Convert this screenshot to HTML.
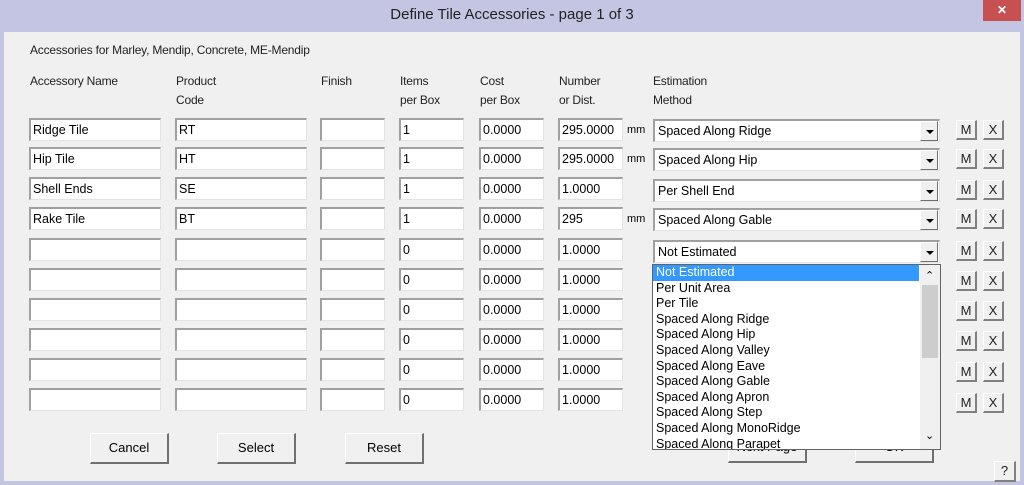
<!DOCTYPE html>
<html><head><meta charset="utf-8"><style>
*{box-sizing:border-box;margin:0;padding:0}
body{width:1024px;height:485px;background:#c3c5e3;font-family:"Liberation Sans",sans-serif;font-size:12px;color:#000;position:relative;overflow:hidden}
.title{position:absolute;left:0;top:0;width:1024px;height:32px;text-align:center;line-height:30px;font-size:15px;color:#222}
.close{position:absolute;left:983px;top:0;width:38px;height:21px;background:#c75050;color:#fff;text-align:center;line-height:20px;font-size:12px;font-weight:bold}
.client{position:absolute;left:4px;top:32px;width:1016px;height:449px;background:#f0f0f0}
.a{position:absolute}
.lbl{position:absolute;line-height:19px;color:#222;letter-spacing:-0.2px}
.in{position:absolute;height:23px;background:#fff;border-top:2px solid #a0a0a0;border-left:2px solid #a0a0a0;border-right:1px solid #e3e3e3;border-bottom:1px solid #e3e3e3;padding-left:2px;line-height:20px;font-size:12.5px;white-space:nowrap;overflow:hidden}
.cb{position:absolute;left:653px;width:287px;height:23px;background:#fff;border-top:2px solid #a0a0a0;border-left:2px solid #a0a0a0;border-right:1px solid #e3e3e3;border-bottom:1px solid #e3e3e3;padding-left:3px;line-height:20px;font-size:12.5px}
.cb i{position:absolute;right:1px;top:0;width:18px;height:20px;background:#f0f0f0;border-right:1px solid #707070;border-bottom:1px solid #707070;border-top:1px solid #fff;border-left:1px solid #fff}
.cb i:after{content:"";position:absolute;left:5px;top:8px;border-left:4px solid transparent;border-right:4px solid transparent;border-top:4px solid #000}
.sb{position:absolute;width:21px;height:20px;background:#f0f0f0;border-top:1px solid #fff;border-left:1px solid #fff;border-right:2px solid #808080;border-bottom:2px solid #808080;text-align:center;line-height:17px;font-size:13px;color:#222}
.btn{position:absolute;width:79px;height:31px;background:#f0f0f0;border-top:1px solid #fff;border-left:1px solid #fff;border-right:2px solid #707070;border-bottom:2px solid #707070;text-align:center;line-height:28px;font-size:13px}
.mm{position:absolute;left:627px;font-size:11px;line-height:20px}
.list{position:absolute;left:652px;top:264px;width:289px;height:186px;background:#fff;border:1px solid #646464;overflow:hidden}
.list div.it{height:15.6px;line-height:15.6px;padding-left:3px;font-size:12.5px;width:266px}
.list .sel{background:#3399ff;color:#fff}
.scr{position:absolute;right:0;top:0;width:20px;height:184px;background:#f0f0f0}
.thumb{position:absolute;left:2px;top:20px;width:16px;height:73px;background:#cdcdcd}
</style></head><body>
<div class="title">Define Tile Accessories - page 1 of 3</div>
<div class="close">✕</div>
<div class="client"></div>

<div class="lbl" style="left:30px;top:41px">Accessories for Marley, Mendip, Concrete, ME-Mendip</div>
<div class="lbl" style="left:30px;top:72px">Accessory Name</div>
<div class="lbl" style="left:176px;top:72px">Product<br>Code</div>
<div class="lbl" style="left:321px;top:72px">Finish</div>
<div class="lbl" style="left:400px;top:72px">Items<br>per Box</div>
<div class="lbl" style="left:480px;top:72px">Cost<br>per Box</div>
<div class="lbl" style="left:559px;top:72px">Number<br>or Dist.</div>
<div class="lbl" style="left:653px;top:72px">Estimation<br>Method</div>

<div class="in" style="left:29px;top:118px;width:132px">Ridge Tile</div>
<div class="in" style="left:175px;top:118px;width:132px">RT</div>
<div class="in" style="left:320px;top:118px;width:65px"></div>
<div class="in" style="left:399px;top:118px;width:65px">1</div>
<div class="in" style="left:479px;top:118px;width:65px">0.0000</div>
<div class="in" style="left:558px;top:118px;width:65px">295.0000</div>
<div class="mm" style="top:120px">mm</div>
<div class="cb" style="top:119px">Spaced Along Ridge<i></i></div>
<div class="sb" style="left:956px;top:120px">M</div><div class="sb" style="left:983px;top:120px">X</div>

<div class="in" style="left:29px;top:147px;width:132px">Hip Tile</div>
<div class="in" style="left:175px;top:147px;width:132px">HT</div>
<div class="in" style="left:320px;top:147px;width:65px"></div>
<div class="in" style="left:399px;top:147px;width:65px">1</div>
<div class="in" style="left:479px;top:147px;width:65px">0.0000</div>
<div class="in" style="left:558px;top:147px;width:65px">295.0000</div>
<div class="mm" style="top:149px">mm</div>
<div class="cb" style="top:148px">Spaced Along Hip<i></i></div>
<div class="sb" style="left:956px;top:149px">M</div><div class="sb" style="left:983px;top:149px">X</div>

<div class="in" style="left:29px;top:177px;width:132px">Shell Ends</div>
<div class="in" style="left:175px;top:177px;width:132px">SE</div>
<div class="in" style="left:320px;top:177px;width:65px"></div>
<div class="in" style="left:399px;top:177px;width:65px">1</div>
<div class="in" style="left:479px;top:177px;width:65px">0.0000</div>
<div class="in" style="left:558px;top:177px;width:65px">1.0000</div>
<div class="cb" style="top:179px">Per Shell End<i></i></div>
<div class="sb" style="left:956px;top:180px">M</div><div class="sb" style="left:983px;top:180px">X</div>

<div class="in" style="left:29px;top:207px;width:132px">Rake Tile</div>
<div class="in" style="left:175px;top:207px;width:132px">BT</div>
<div class="in" style="left:320px;top:207px;width:65px"></div>
<div class="in" style="left:399px;top:207px;width:65px">1</div>
<div class="in" style="left:479px;top:207px;width:65px">0.0000</div>
<div class="in" style="left:558px;top:207px;width:65px">295</div>
<div class="mm" style="top:209px">mm</div>
<div class="cb" style="top:208px">Spaced Along Gable<i></i></div>
<div class="sb" style="left:956px;top:209px">M</div><div class="sb" style="left:983px;top:209px">X</div>

<div class="in" style="left:29px;top:238px;width:132px"></div>
<div class="in" style="left:175px;top:238px;width:132px"></div>
<div class="in" style="left:320px;top:238px;width:65px"></div>
<div class="in" style="left:399px;top:238px;width:65px">0</div>
<div class="in" style="left:479px;top:238px;width:65px">0.0000</div>
<div class="in" style="left:558px;top:238px;width:65px">1.0000</div>
<div class="cb" style="top:240px">Not Estimated<i></i></div>
<div class="sb" style="left:956px;top:241px">M</div><div class="sb" style="left:983px;top:241px">X</div>

<div class="in" style="left:29px;top:268px;width:132px"></div>
<div class="in" style="left:175px;top:268px;width:132px"></div>
<div class="in" style="left:320px;top:268px;width:65px"></div>
<div class="in" style="left:399px;top:268px;width:65px">0</div>
<div class="in" style="left:479px;top:268px;width:65px">0.0000</div>
<div class="in" style="left:558px;top:268px;width:65px">1.0000</div>
<div class="sb" style="left:956px;top:271px">M</div><div class="sb" style="left:983px;top:271px">X</div>

<div class="in" style="left:29px;top:298px;width:132px"></div>
<div class="in" style="left:175px;top:298px;width:132px"></div>
<div class="in" style="left:320px;top:298px;width:65px"></div>
<div class="in" style="left:399px;top:298px;width:65px">0</div>
<div class="in" style="left:479px;top:298px;width:65px">0.0000</div>
<div class="in" style="left:558px;top:298px;width:65px">1.0000</div>
<div class="sb" style="left:956px;top:301px">M</div><div class="sb" style="left:983px;top:301px">X</div>

<div class="in" style="left:29px;top:328px;width:132px"></div>
<div class="in" style="left:175px;top:328px;width:132px"></div>
<div class="in" style="left:320px;top:328px;width:65px"></div>
<div class="in" style="left:399px;top:328px;width:65px">0</div>
<div class="in" style="left:479px;top:328px;width:65px">0.0000</div>
<div class="in" style="left:558px;top:328px;width:65px">1.0000</div>
<div class="sb" style="left:956px;top:331px">M</div><div class="sb" style="left:983px;top:331px">X</div>

<div class="in" style="left:29px;top:358px;width:132px"></div>
<div class="in" style="left:175px;top:358px;width:132px"></div>
<div class="in" style="left:320px;top:358px;width:65px"></div>
<div class="in" style="left:399px;top:358px;width:65px">0</div>
<div class="in" style="left:479px;top:358px;width:65px">0.0000</div>
<div class="in" style="left:558px;top:358px;width:65px">1.0000</div>
<div class="sb" style="left:956px;top:362px">M</div><div class="sb" style="left:983px;top:362px">X</div>

<div class="in" style="left:29px;top:388px;width:132px"></div>
<div class="in" style="left:175px;top:388px;width:132px"></div>
<div class="in" style="left:320px;top:388px;width:65px"></div>
<div class="in" style="left:399px;top:388px;width:65px">0</div>
<div class="in" style="left:479px;top:388px;width:65px">0.0000</div>
<div class="in" style="left:558px;top:388px;width:65px">1.0000</div>
<div class="sb" style="left:956px;top:393px">M</div><div class="sb" style="left:983px;top:393px">X</div>

<div class="btn" style="left:90px;top:433px">Cancel</div>
<div class="btn" style="left:217px;top:433px">Select</div>
<div class="btn" style="left:345px;top:433px">Reset</div>
<div class="btn" style="left:728px;top:432px">Next Page</div>
<div class="btn" style="left:855px;top:432px">OK</div>
<div class="sb" style="left:994px;top:461px;width:22px;height:21px">?</div>

<div class="list">
<div class="it sel">Not Estimated</div>
<div class="it">Per Unit Area</div>
<div class="it">Per Tile</div>
<div class="it">Spaced Along Ridge</div>
<div class="it">Spaced Along Hip</div>
<div class="it">Spaced Along Valley</div>
<div class="it">Spaced Along Eave</div>
<div class="it">Spaced Along Gable</div>
<div class="it">Spaced Along Apron</div>
<div class="it">Spaced Along Step</div>
<div class="it">Spaced Along MonoRidge</div>
<div class="it">Spaced Along Parapet</div>
<div class="scr"><div class="a" style="left:5px;top:4px;font-size:11px">&#8963;</div><div class="thumb"></div><div class="a" style="left:5px;top:164px;font-size:11px">&#8964;</div></div>
</div>
</body></html>
